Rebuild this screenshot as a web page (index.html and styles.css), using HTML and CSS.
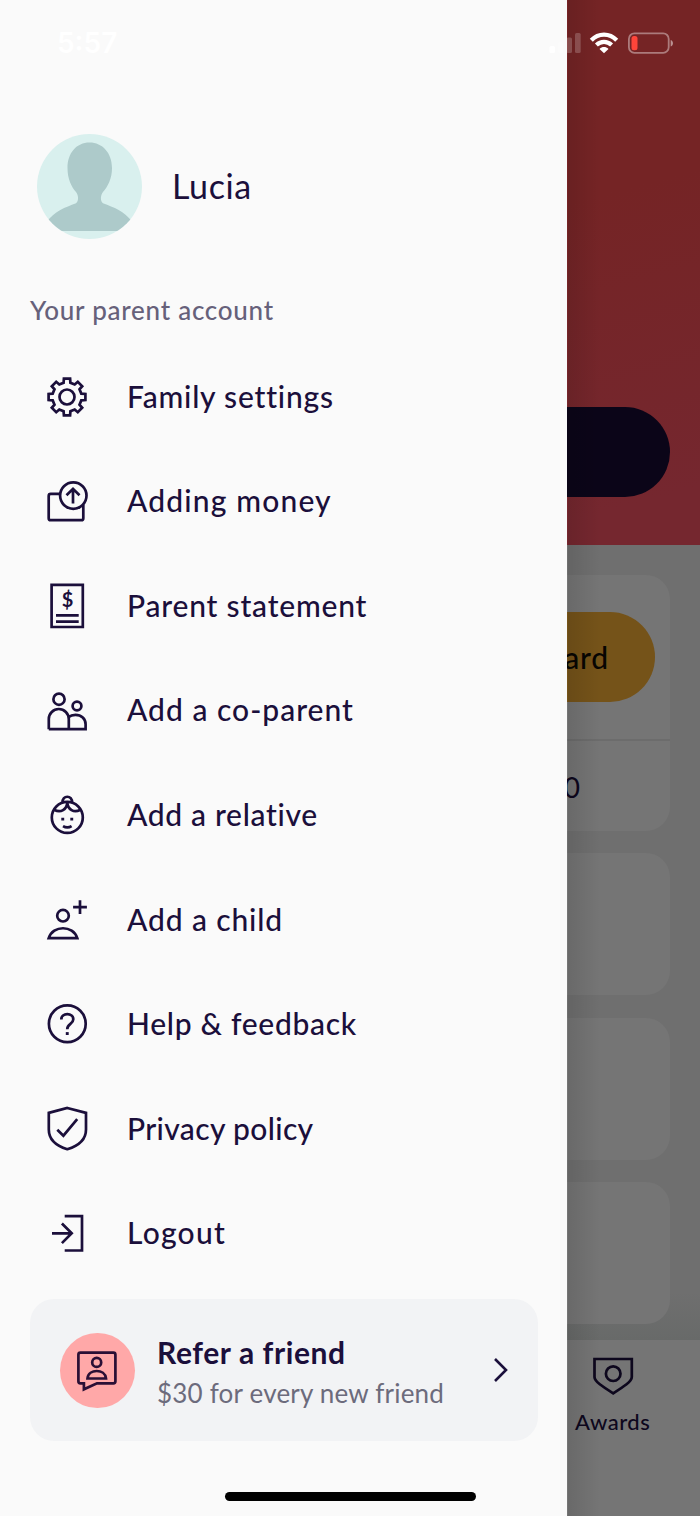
FILE: index.html
```html
<!DOCTYPE html>
<html lang="en">
<head>
<meta charset="utf-8">
<title>Parent account</title>
<link rel="stylesheet" href="styles.css">
</head>
<body>
<div class="screen">
  <aside class="drawer">
    <header class="profile">
      <svg class="avatar" viewBox="0 0 105 105">
        <defs><clipPath id="round"><circle cx="52.5" cy="52.5" r="52.5"/></clipPath></defs>
        <circle cx="52.5" cy="52.5" r="52.5" fill="#d9f0ee"/>
        <path clip-path="url(#round)" fill="#adcaca" d="M52.5 8.5C65.500 8.500 75 19 75 34c0 11-4.500 19-9 24-2.500 3-3 9 0 11.300C77 73.500 87 77 95.500 88V97H9.500V88C18 77 28 73.500 39 69.300 42 67 41.500 61 39 58 34.500 53 30.500 45 30.500 34 30.500 19 39.500 8.500 52.500 8.500Z"/>
      </svg>
      <span class="name">Lucia</span>
    </header>
    <h2 class="heading">Your parent account</h2>
    <nav class="menu">
      <a class="item"><svg class="icon" viewBox="0 0 46 46"><path d="M19.600 8.700 19.900 4.600H26.100L26.400 8.700 30.700 10.500 33.800 7.800 38.200 12.200 35.500 15.300 37.300 19.600 41.400 19.900V26.100L37.300 26.400 35.500 30.700 38.200 33.800 33.800 38.200 30.700 35.500 26.400 37.300 26.100 41.400H19.900L19.600 37.300 15.300 35.500 12.200 38.200 7.800 33.800 10.500 30.700 8.700 26.400 4.600 26.100V19.900L8.700 19.600 10.500 15.300 7.800 12.200 12.200 7.800 15.300 10.500Z"/><circle cx="23" cy="23" r="7.500"/></svg><span class="label">Family settings</span></a>
      <a class="item"><svg class="icon" viewBox="0 0 46 46"><path d="M16 15.900H6.700a2 2 0 0 0-2 2V40.200a2 2 0 0 0 2 2H37.300a2 2 0 0 0 2-2V27"/><circle cx="29.300" cy="17.600" r="13.200"/><path d="M29 25.600V11M22.500 17.300 29 10.800 35.500 17.300"/></svg><span class="label adding">Adding money</span></a>
      <a class="item"><svg class="icon" viewBox="0 0 46 46"><path d="M7.600 1.900H38.800V44H7.600ZM12 32.300H34.700M12 38.600H34.700"/><text class="dollar" x="23.500" y="23.500">$</text></svg><span class="label">Parent statement</span></a>
      <a class="item"><svg class="icon" viewBox="0 0 46 46"><circle cx="15" cy="11.200" r="5.600"/><circle cx="33" cy="18" r="4.400"/><path d="M4.800 41.200V31a10 10 0 0 1 20 0V41.200M24.400 29.300c2-1.700 4.300-2.400 7.100-2.400 5.900 0 10.100 4 10.100 9.300v5H4.800"/></svg><span class="label coparent">Add a co-parent</span></a>
      <a class="item"><svg class="icon" viewBox="0 0 46 46"><circle cx="23.300" cy="25.400" r="15.500"/><path d="M18.600 10.500C18 2.800 28.600 2.800 28 10.500M23.300 11C22.500 17.500 17 21 10.500 18M23.300 11C24.100 17.500 29.600 21 36.100 18M19 34.200c2.500 1.500 6.100 1.500 8.600 0"/><path class="solid" d="M17.300 25.700h2.900v2.900h-2.900ZM26.300 25.700H29.200v2.900h-2.900Z"/></svg><span class="label relative">Add a relative</span></a>
      <a class="item"><svg class="icon" viewBox="0 0 46 46"><circle cx="19" cy="18.700" r="5.800"/><path d="M4.700 41.200C9 27.900 29 27.900 33.300 41.200ZM36 3.200V17M29.100 10.100H42.900"/></svg><span class="label child">Add a child</span></a>
      <a class="item"><svg class="icon" viewBox="0 0 46 46"><circle cx="23.300" cy="22.800" r="18.400"/><path d="M17.300 18.500c0-3.500 2.700-5.400 6-5.400 3.400 0 6 2 6 5.100 0 5-6.100 4.300-6.100 10.100"/><path class="solid" d="M21.800 31.100h2.900v2.900h-2.900Z"/></svg><span class="label help">Help &amp; feedback</span></a>
      <a class="item"><svg class="icon" viewBox="0 0 46 46"><path d="M23.300 2 42 6.900V23.500C42 34 34 40 23.300 43.200 12.700 40 4.800 34 4.800 23.500V6.900ZM13.300 23.700 19.400 29.700 33.200 13.200"/></svg><span class="label privacy">Privacy policy</span></a>
      <a class="item"><svg class="icon" viewBox="0 0 46 46"><path d="M20.700 5.200H38V39.500H20.700M8 22.300H27.600M17.900 12.500 27.700 22.300 17.900 32.100"/></svg><span class="label logout">Logout</span></a>
    </nav>
    <a class="refer">
      <span class="badge"><svg class="icon" viewBox="0 0 46 46"><path d="M23 36.300H39.400a2 2 0 0 0 2-2V7.700a2 2 0 0 0-2-2H6.400a2 2 0 0 0-2 2V34.300a2 2 0 0 0 2 2H9.900V42.300Z"/><circle cx="22.700" cy="15.400" r="4.500"/><path d="M13.500 31.500C14.500 21.500 31 21.500 32 31.500Z"/></svg></span>
      <span class="copy"><strong class="title">Refer a friend</strong><span class="note">$30 for every new friend</span></span>
      <svg class="chevron" viewBox="0 0 16 26"><path d="M2 2 13 13 2 24"/></svg>
    </a>
  </aside>
  <main class="behind">
    <section class="hero"><div class="pill"></div></section>
    <section class="feed">
      <div class="card first"><div class="action"><span class="cta">ard</span></div><div class="amount">0</div></div>
      <div class="card"></div>
      <div class="card"></div>
      <div class="card"></div>
    </section>
    <footer class="tabs"><svg class="icon" viewBox="0 0 46 46"><path d="M4.500 6H41.800V24C41.800 28.500 34 33.500 23.200 40.300 12.400 33.500 4.500 28.500 4.500 24Z"/><circle cx="23.200" cy="20.700" r="7.300"/></svg><span class="tab">Awards</span></footer>
  </main>
  <div class="shade"></div>
  <div class="status">
    <span class="time">5:57</span>
    <svg class="signals" viewBox="0 0 128 24">
      <rect x="1.500" y="16" width="5.500" height="7" rx="1.500" fill="#fff"/>
      <rect x="10" y="12" width="5.500" height="11" rx="1.500" fill="#fff" opacity=".2"/>
      <rect x="18.500" y="7.500" width="5.500" height="15.500" rx="1.500" fill="#fff" opacity=".2"/>
      <rect x="27" y="3" width="5.700" height="20" rx="1.500" fill="#fff" opacity=".2"/>
      <g fill="none" stroke="#fff" stroke-width="4.200"><path d="M43.300 10.300C50.500 2.600 61.500 2.600 68.700 10.300M48.400 15C52.900 10.800 59.100 10.800 63.600 15"/></g>
      <path fill="#fff" d="M51.500 18.900c2.700-2.400 6.300-2.400 9 0L56 23.200Z"/>
      <rect x="80.900" y="3.400" width="39.800" height="19.400" rx="5.500" fill="none" stroke="#fff" stroke-width="1.800" opacity=".4"/>
      <rect x="83.500" y="6" width="6" height="14.200" rx="2.500" fill="#ff453a"/>
      <path d="M122.700 10c3 .8 3 5.700 0 6.500Z" fill="#fff" opacity=".5"/>
    </svg>
  </div>
  <div class="home"></div>
</div>
</body>
</html>
```
FILE: styles.css
```css
* { box-sizing: border-box; }
body { margin: 0; font-family: Lato, "Open Sans", sans-serif; color: #1b0f3b; }
.screen { position: relative; display: flex; width: 700px; height: 1516px; overflow: hidden; }
.drawer { width: 567.4px; flex: none; padding: 134px 30px 0; background: #fafafa; }
.profile { display: flex; align-items: center; gap: 30px; height: 105px; padding-left: 7px; }
.avatar { width: 105px; height: 105px; }
.name { padding-bottom: 3px; font-size: 34px; font-weight: 400; letter-spacing: .6px; white-space: nowrap; }
.heading { margin: 51px 0 0; height: 40px; line-height: 40px; font-size: 26px; font-weight: 500; letter-spacing: .75px; color: #66617a; white-space: nowrap; }
.menu { display: grid; grid-auto-rows: 104.6px; margin-top: 14.5px; }
.item { display: flex; align-items: center; gap: 37px; padding-left: 14px; }
.icon { width: 46px; height: 46px; flex: none; fill: none; stroke: #1b0f3b; stroke-width: 2.700; }
.icon .solid { fill: #1b0f3b; stroke: none; }
.dollar { font-size: 20px; font-weight: 700; fill: #1b0f3b; stroke: none; text-anchor: middle; }
.label { padding-bottom: 2.500px; font-size: 30px; font-weight: 500; letter-spacing: .8px; white-space: nowrap; }
.adding { letter-spacing: 1.16px; }
.coparent { letter-spacing: 1px; }
.relative { letter-spacing: .67px; }
.child { letter-spacing: .87px; }
.help { letter-spacing: .7px; }
.privacy { letter-spacing: .36px; }
.logout { letter-spacing: 1.25px; }
.refer { display: flex; align-items: center; width: 507.5px; height: 142px; margin-top: 13.5px; padding: 0 29px 0 30px; border-radius: 24px; background: #f2f3f5; }
.badge { display: grid; place-items: center; width: 74.500px; height: 75px; border-radius: 50%; background: #ffa8a8; }
.badge .icon { stroke: #2a0f35; }
.copy { display: flex; flex-direction: column; flex: 1; margin-left: 22.500px; padding-top: 5px; white-space: nowrap; }
.title { font-size: 30px; line-height: 41px; font-weight: 700; letter-spacing: .6px; }
.note { font-size: 26px; line-height: 41px; letter-spacing: .2px; color: #6c6b7c; }
.chevron { width: 16px; height: 26px; fill: none; stroke: #1b0f3b; stroke-width: 2.600; }
.behind { display: flex; flex-direction: column; flex: 1; min-width: 0; overflow: hidden; background: #6f6f6f; color: #0d071d; }
.hero { height: 545px; padding: 407px 30px 0 0; background: linear-gradient(165deg, #752425 35%, #75272f 90%); }
.pill { height: 90px; border-radius: 0 45px 45px 0; background: #0b0518; }
.feed { display: grid; grid-template-columns: minmax(0, 1fr); grid-template-rows: 256px 142px 142px 142px; gap: 22.300px; height: 795px; padding: 30px 30px 0 0; align-content: start; background: linear-gradient(#6f6f6f 94%, #686a69); }
.card { border-radius: 0 24px 24px 0; background: #757575; }
.first { display: grid; grid-template-columns: minmax(0, 1fr); grid-template-rows: 166px 1fr; }
.action { padding: 37px 15px 0 0; border-bottom: 2px solid #6c6c6c; }
.cta { display: flex; justify-content: flex-end; height: 90px; padding-right: 46px; border-radius: 0 45px 45px 0; background: #755319; color: #070502; font-size: 30px; font-weight: 500; line-height: 90px; letter-spacing: .8px; }
.amount { display: flex; justify-content: flex-end; padding-right: 90px; font-size: 28px; line-height: 92px; }
.tabs { display: flex; flex: 1; flex-direction: column; align-items: center; padding: 13px 42px 0 0; background: #757575; }
.tabs .icon { stroke: #0d071d; }
.tab { margin-top: 8px; font-size: 22px; font-weight: 500; line-height: 30px; letter-spacing: .5px; }
.shade { position: absolute; left: 567.5px; top: 0; width: 32px; height: 1516px; background: linear-gradient(90deg, rgba(0,0,0,.1), transparent); }
.status { position: absolute; inset: 29px 24px auto 57px; display: flex; justify-content: space-between; align-items: center; height: 26px; color: #fff; }
.time { padding-top: 2px; font-family: Inter, sans-serif; font-size: 28px; font-weight: 600; }
.signals { width: 128px; height: 24px; }
.home { position: absolute; left: 225px; top: 1492px; width: 250.5px; height: 9px; border-radius: 5px; background: #000; }
```
